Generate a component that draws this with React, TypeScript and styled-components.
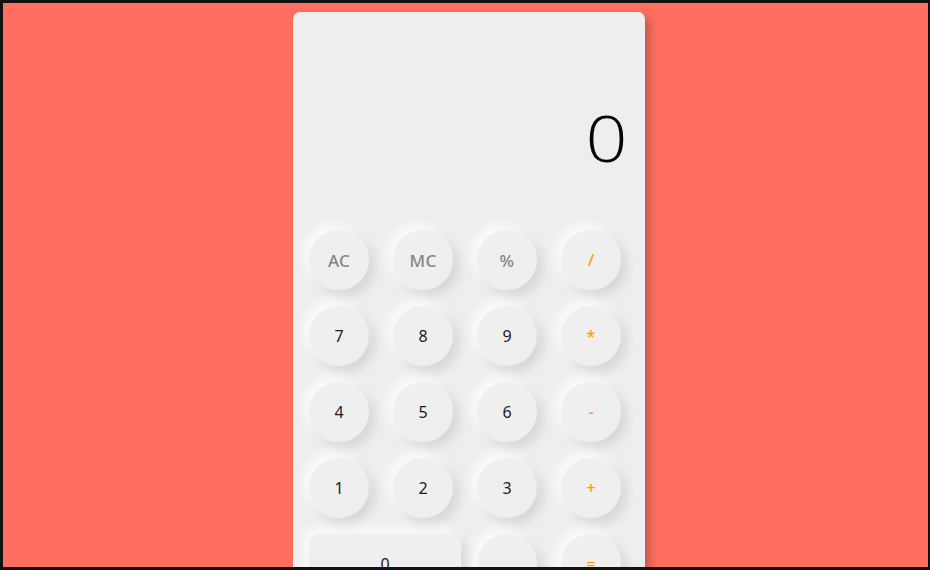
import React from "react";
import styled, { createGlobalStyle } from "styled-components";

const Global = createGlobalStyle`
  html, body { margin: 0; padding: 0; background: #0e1211; }
  * { box-sizing: border-box; }
`;

const Frame = styled.div`
  width: 930px;
  height: 570px;
  border-style: solid;
  border-color: #0e1211;
  border-width: 3px 2px 3px 3px;
  background: #ff6f5f;
  overflow: hidden;
  font-family: "Open Sans", "Noto Sans", sans-serif;
`;

const Card = styled.div`
  width: 352px;
  height: 620px;
  margin: 9px 0 0 290px;
  background: #eeeeee;
  border-radius: 7px;
  box-shadow: 5px 5px 10px rgba(0, 0, 0, 0.22);
`;

const Display = styled.div`
  height: 218px;
  display: flex;
  align-items: flex-end;
  justify-content: flex-end;
  padding: 0 17px 60px 0;
  font-size: 64px;
  line-height: 64px;
  font-weight: 300;
  color: #050505;
`;

const Digit = styled.span`
  display: inline-block;
  transform: scaleX(1.15);
  transform-origin: right center;
`;

const Keypad = styled.div`
  display: grid;
  grid-template-columns: repeat(4, 60px);
  grid-auto-rows: 60px;
  column-gap: 24px;
  row-gap: 16px;
  padding-left: 16px;
`;

type Kind = "fn" | "num" | "op";

const colors: Record<Kind, string> = {
  fn: "#858585",
  num: "#1c1c1c",
  op: "#ff9d00",
};

const Key = styled.button<{ $kind: Kind; $wide?: boolean }>`
  grid-column: ${(p) => (p.$wide ? "span 2" : "auto")};
  width: ${(p) => (p.$wide ? "152px" : "60px")};
  height: 60px;
  border: none;
  padding: 0;
  border-radius: ${(p) => (p.$wide ? "10px" : "50%")};
  background: #efefef;
  box-shadow: -6px -6px 12px rgba(255, 255, 255, 0.75),
    6px 6px 12px rgba(0, 0, 0, 0.1);
  font-family: "Noto Sans", "Open Sans", sans-serif;
  font-size: ${(p) => (p.$kind === "fn" ? "17px" : "16px")};
  font-weight: ${(p) => (p.$kind === "num" ? 400 : 500)};
  color: ${(p) => colors[p.$kind]};
  letter-spacing: ${(p) => (p.$kind === "fn" ? "0.3px" : "0")};
  display: flex;
  align-items: center;
  justify-content: center;
  cursor: pointer;
`;

const keys: { label: string; kind: Kind; wide?: boolean }[] = [
  { label: "AC", kind: "fn" },
  { label: "MC", kind: "fn" },
  { label: "%", kind: "fn" },
  { label: "/", kind: "op" },
  { label: "7", kind: "num" },
  { label: "8", kind: "num" },
  { label: "9", kind: "num" },
  { label: "*", kind: "op" },
  { label: "4", kind: "num" },
  { label: "5", kind: "num" },
  { label: "6", kind: "num" },
  { label: "-", kind: "op" },
  { label: "1", kind: "num" },
  { label: "2", kind: "num" },
  { label: "3", kind: "num" },
  { label: "+", kind: "op" },
  { label: "0", kind: "num", wide: true },
  { label: ".", kind: "num" },
  { label: "=", kind: "op" },
];

export default function App() {
  return (
    <>
      <Global />
      <Frame>
        <Card>
          <Display>
            <Digit>0</Digit>
          </Display>
          <Keypad>
            {keys.map((k) => (
              <Key key={k.label} $kind={k.kind} $wide={k.wide}>
                {k.label}
              </Key>
            ))}
          </Keypad>
        </Card>
      </Frame>
    </>
  );
}
